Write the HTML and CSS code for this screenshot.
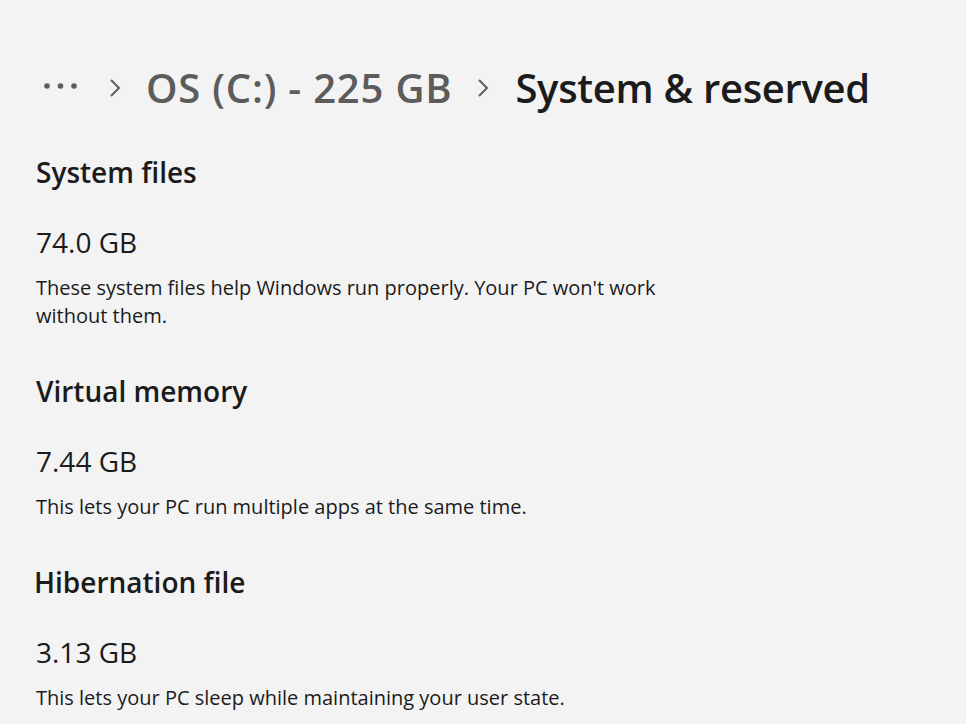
FILE: index.html
```html
<!DOCTYPE html>
<html lang="en">
<head>
    <meta charset="UTF-8">
    <meta name="viewport" content="width=device-width, initial-scale=1.0">
    <title>System &amp; reserved</title>
    <link rel="stylesheet" href="styles.css">
</head>
<body>
    <div id="page">
        <header id="breadcrumb">
            <button id="more" aria-label="More">
                <svg width="34" height="8" viewBox="0 0 34 8"><circle cx="3" cy="4" r="2.8"/><circle cx="16.5" cy="4" r="2.8"/><circle cx="30" cy="4" r="2.8"/></svg>
            </button>
            <svg class="chevron first" width="14" height="22" viewBox="0 0 14 22"><path d="M3 3 L11 11 L3 19"/></svg>
            <span class="crumb">OS (C:) - 225 GB</span>
            <svg class="chevron second" width="14" height="22" viewBox="0 0 14 22"><path d="M3 3 L11 11 L3 19"/></svg>
            <h1>System &amp; reserved</h1>
        </header>
        <main>
            <section class="item">
                <h2>System files</h2>
                <div class="size">74.0 GB</div>
                <p>These system files help Windows run properly. Your PC won't work without them.</p>
            </section>
            <section class="item">
                <h2>Virtual memory</h2>
                <div class="size">7.44 GB</div>
                <p>This lets your PC run multiple apps at the same time.</p>
            </section>
            <section class="item">
                <h2 class="shift">Hibernation file</h2>
                <div class="size">3.13 GB</div>
                <p>This lets your PC sleep while maintaining your user state.</p>
            </section>
        </main>
    </div>
</body>
</html>
```
FILE: styles.css
```css
body {
    font-family: "Open Sans", "Noto Sans", sans-serif;
    margin: 0;
    padding: 0;
    width: 966px;
    height: 724px;
    overflow: hidden;
    background: #f3f3f3;
    color: #1b1b1b;
}
#page {
    padding: 60px 36px 0 36px;
}
#breadcrumb {
    display: flex;
    align-items: center;
    height: 56px;
}
#more {
    background: none;
    border: none;
    padding: 0;
    margin: 0 0 4px 8px;
    display: flex;
    fill: #5c5c5c;
}
.chevron {
    fill: none;
    stroke: #5c5c5c;
    stroke-width: 2;
}
.chevron.first {
    margin: 0 24px 0 30px;
}
.chevron.second {
    margin: 0 25px 0 24px;
}
.crumb {
    font-size: 40px;
    font-weight: 600;
    color: #5c5c5c;
    line-height: 56px;
    letter-spacing: 0.8px;
}
#breadcrumb h1 {
    margin: 0;
    font-size: 40px;
    font-weight: 600;
    line-height: 56px;
    letter-spacing: -0.3px;
    color: #1b1b1b;
}
main {
    margin-top: 36px;
}
.item {
    margin-bottom: 41px;
}
.item h2 {
    margin: 0 0 30px 0;
    font-size: 28px;
    font-weight: 600;
    line-height: 40px;
}
.item h2.shift {
    margin-left: -2px;
}
.size {
    font-size: 28px;
    line-height: 40px;
    margin-bottom: 12px;
}
.item p {
    margin: 0;
    font-size: 20px;
    line-height: 28px;
    max-width: 630px;
}
```
